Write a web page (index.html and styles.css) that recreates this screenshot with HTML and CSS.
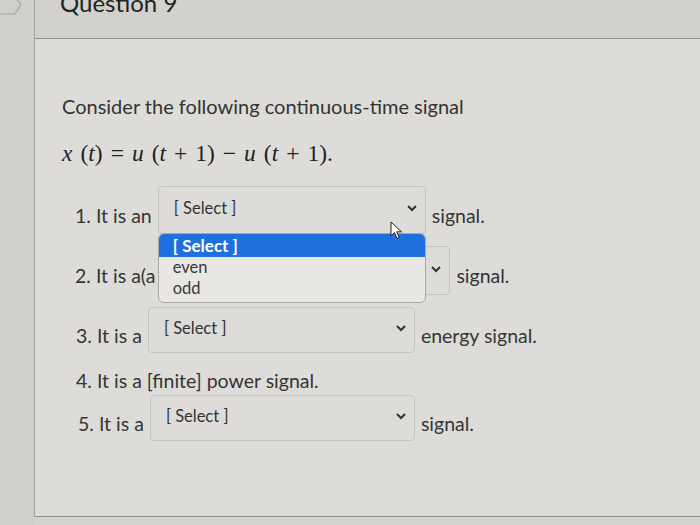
FILE: index.html
```html
<!DOCTYPE html>
<html>
<head>
<meta charset="utf-8">
<link rel="stylesheet" href="styles.css">
</head>
<body>
<div class="page">
  <div class="gutter">
    <svg class="flag" width="24" height="18" viewBox="0 0 24 18"><path d="M-2 -2 H15 L21 4 L15 14 H-2" fill="none" stroke="#a9a8a4" stroke-width="1.2"/></svg>
  </div>
  <div class="card">
    <div class="card-head"><h2 class="qtitle">Question 9</h2></div>
    <div class="card-body">
      <p class="intro">Consider the following continuous-time signal</p>
      <p class="math"><i>x</i><span class="fn">(<i>t</i>)</span><span class="op">=</span><i>u</i><span class="fn">(<i>t</i><span class="op">+</span>1)</span><span class="op">−</span><i>u</i><span class="fn">(<i>t</i><span class="op">+</span>1).</span></p>

      <div class="row r1">
        <span class="lbl">1. It is an</span>
        <div class="selwrap">
          <div class="sel w268"><span class="seltext">[ Select ]</span>
            <svg class="chev" width="10" height="7" viewBox="0 0 10 7"><polyline points="1,1 5,5 9,1" fill="none" stroke="#333" stroke-width="2"/></svg>
          </div>
          <div class="menu">
            <div class="opt active">[ Select ]</div>
            <div class="opt">even</div>
            <div class="opt">odd</div>
          </div>
          <svg class="cursor" width="14" height="20" viewBox="0 0 14 20"><path d="M1 1 L1 15 L4.5 11.5 L7 17.5 L9.3 16.5 L6.8 10.8 L11.5 10.8 Z" fill="#fff" stroke="#222" stroke-width="1"/></svg>
        </div>
        <span class="lbl after">signal.</span>
      </div>

      <div class="row r2">
        <span class="lbl">2. It is a(a</span>
        <div class="sel w290"><span class="seltext">[ Select ]</span>
          <svg class="chev" width="10" height="7" viewBox="0 0 10 7"><polyline points="1,1 5,5 9,1" fill="none" stroke="#333" stroke-width="2"/></svg>
        </div>
        <span class="lbl after">signal.</span>
      </div>

      <div class="row r3">
        <span class="lbl">3. It is a</span>
        <div class="sel w267"><span class="seltext">[ Select ]</span>
          <svg class="chev" width="10" height="7" viewBox="0 0 10 7"><polyline points="1,1 5,5 9,1" fill="none" stroke="#333" stroke-width="2"/></svg>
        </div>
        <span class="lbl after">energy signal.</span>
      </div>

      <p class="line4">4. It is a [finite] power signal.</p>

      <div class="row r5">
        <span class="lbl">5. It is a</span>
        <div class="sel w265"><span class="seltext">[ Select ]</span>
          <svg class="chev" width="10" height="7" viewBox="0 0 10 7"><polyline points="1,1 5,5 9,1" fill="none" stroke="#333" stroke-width="2"/></svg>
        </div>
        <span class="lbl after">signal.</span>
      </div>
    </div>
  </div>
</div>
</body>
</html>
```
FILE: styles.css
```css
html, body {
  margin: 0;
  padding: 0;
}
body {
  background: #d3d2ce;
  font-family: Lato, "Open Sans", sans-serif;
  color: #3a3a3a;
  width: 700px;
  height: 525px;
  overflow: hidden;
}
.page {
  display: flex;
  height: 525px;
}
.gutter {
  width: 34px;
  flex: none;
  background: #d0cfcb;
  position: relative;
}
.flag {
  position: absolute;
  left: 0;
  top: 0;
}
.card {
  flex: 1;
  border-left: 1px solid #a4a39f;
  height: 516px;
  border-bottom: 1px solid #8e8d89;
  background: #dedcd8;
  display: flex;
  flex-direction: column;
}
.card-head {
  height: 38px;
  flex: none;
  background: #d2d1cd;
  border-bottom: 1px solid #8f8e8a;
  overflow: hidden;
}
.qtitle {
  margin: -12px 0 0 25px;
  font-size: 24px;
  font-weight: 400;
  line-height: 30px;
  color: #222;
}
.card-body {
  padding: 53px 0 0 27px;
}
.intro {
  margin: 0;
  font-size: 20px;
  line-height: 28px;
  color: #333;
}
.math {
  margin: 19px 0 0 0;
  font-family: "Liberation Serif", "DejaVu Serif", serif;
  font-size: 23.5px;
  line-height: 28px;
  color: #222;
}
.math i {
  font-style: italic;
}
.math .fn {
  margin-left: 8px;
}
.math .op {
  margin: 0 8px;
}
.row {
  display: flex;
  align-items: center;
  margin-left: 13px;
}
.r1 { margin-top: 19px; }
.r2 { margin-top: 12px; }
.r3 { margin-top: 12px; margin-left: 14px; }
.r5 { margin-top: 0; margin-left: 16px; }
.lbl {
  font-size: 19.5px;
  color: #353535;
  padding-top: 10px;
}
.after {
  margin-left: 6px;
}
.selwrap {
  position: relative;
  margin-left: 6px;
}
.row > .sel {
  margin-left: 6px;
}
.sel {
  height: 46px;
  box-sizing: border-box;
  border: 1px solid #c4c3bf;
  border-radius: 4px;
  background: #dddcd8;
  display: flex;
  align-items: center;
  justify-content: space-between;
  padding: 0 8px 0 15px;
}
.w268 { width: 268px; height: 48px; }
.w290 { width: 289px; height: 49px; }
.w267 { width: 267px; }
.w265 { width: 265px; }
.seltext {
  font-size: 16.5px;
  color: #333;
  margin-top: -4px;
}
.chev {
  margin-top: -3px;
}
.menu {
  position: absolute;
  left: 0;
  top: 47px;
  width: 268px;
  height: 70px;
  box-sizing: border-box;
  background: #e8e7e4;
  border: 1px solid #a9a8a5;
  border-radius: 6px;
  overflow: hidden;
}
.opt {
  font-size: 16.5px;
  line-height: 21px;
  padding-left: 14px;
  color: #3a3a3a;
}
.opt.active {
  background: #1f6fdc;
  color: #fff;
  font-weight: 700;
  font-size: 17px;
  height: 23px;
  line-height: 23px;
}
.cursor {
  position: absolute;
  left: 232px;
  top: 35px;
}
.line4 {
  margin: 14px 0 0 14px;
  font-size: 19.5px;
  line-height: 28px;
  color: #353535;
}
```
